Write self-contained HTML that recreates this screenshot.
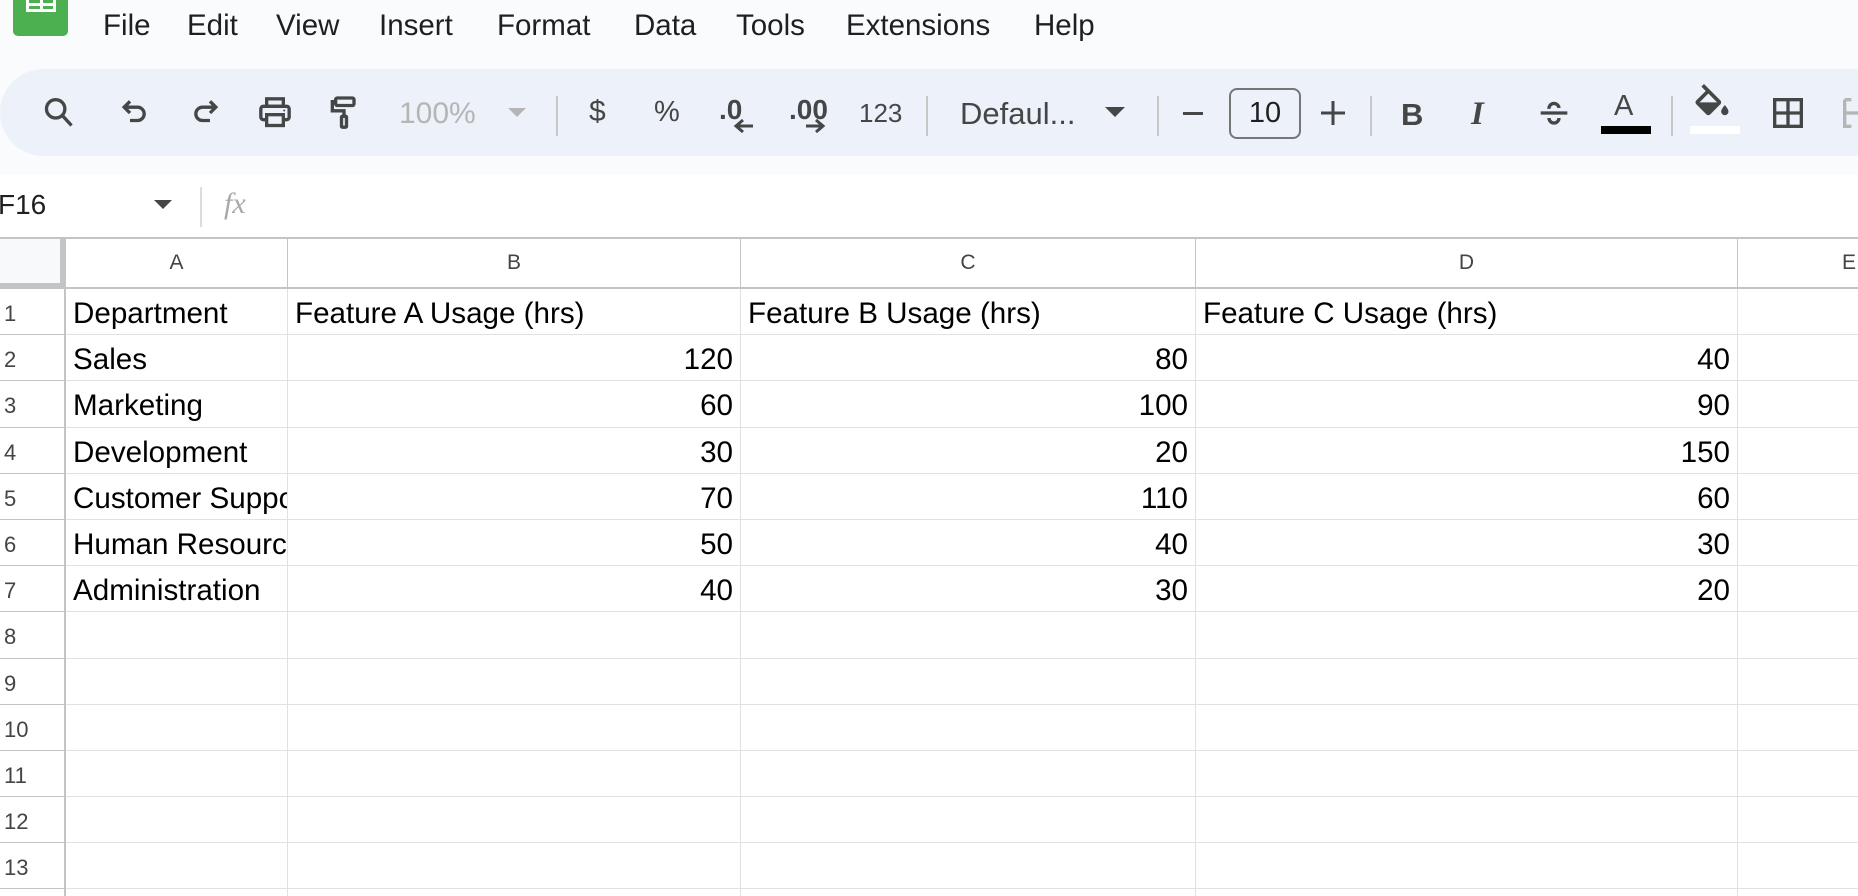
<!DOCTYPE html>
<html><head><meta charset="utf-8">
<style>
*{margin:0;padding:0;box-sizing:border-box}
html,body{width:1858px;height:896px;overflow:hidden}
body{background:#fff;font-family:"Liberation Sans",Arial,sans-serif;position:relative;color:#000}
.top{position:absolute;left:0;top:0;width:1858px;height:175px;background:#f9fbfd}
.menu{position:absolute;top:9px;font-size:29.5px;color:#1f1f1f}
.tb{position:absolute;left:0;top:69px;width:1900px;height:87px;background:#edf2fa;border-radius:44px}
.ic{position:absolute;top:93px;width:40px;height:40px}
.sep{position:absolute;top:96px;width:2px;height:40px;background:#c7c7c7}
.tt{position:absolute;font-size:28px;color:#444746}
.fx{position:absolute;left:0;top:175px;width:1858px;height:62px;background:#fff}
.grid{position:absolute;left:0;top:237px;display:grid;grid-template-columns:66px 222px 453px 455px 542px 200px;grid-template-rows:52px repeat(14,46.2px)}
.grid div{border-right:1px solid #e1e1e1;border-bottom:1px solid #e1e1e1;font-size:29.6px;line-height:45px;padding:2px 7px 0;white-space:nowrap;overflow:hidden}
.grid .h{border-bottom:2px solid #c4c4c4;border-right:1px solid #c4c4c4;font-size:21px;color:#444;text-align:center;line-height:48px;border-top:2px solid #c4c4c4;padding:0}
.grid .r{border-right:2px solid #c4c4c4;border-bottom:1px solid #c4c4c4;font-size:22px;color:#444;padding:3px 0 0 4px;line-height:44px}
.grid .n{text-align:right}
.grid .c{background:#f8f9fa;border-right:6px solid #c4c4c4;border-bottom:6px solid #c4c4c4;border-top:2px solid #c4c4c4}
</style></head><body>
<div class="top"></div>
<div style="position:absolute;left:13px;top:-8px;width:55px;height:44px;background:#4caf50;border-radius:5px"></div>
<div style="position:absolute;left:26px;top:-2px;width:30px;height:14px;border:3px solid #fff;border-top:none"></div>
<div style="position:absolute;left:40px;top:-2px;width:3px;height:14px;background:#fff"></div>
<div style="position:absolute;left:26px;top:3px;width:30px;height:3px;background:#fff"></div>
<span class="menu" style="left:103px">File</span>
<span class="menu" style="left:187px">Edit</span>
<span class="menu" style="left:276px">View</span>
<span class="menu" style="left:379px">Insert</span>
<span class="menu" style="left:497px">Format</span>
<span class="menu" style="left:634px">Data</span>
<span class="menu" style="left:736px">Tools</span>
<span class="menu" style="left:846px">Extensions</span>
<span class="menu" style="left:1034px">Help</span>
<div class="tb"></div>
<svg class="ic" style="left:39px" viewBox="0 0 24 24" fill="none" stroke="#444746" stroke-width="2"><circle cx="10" cy="9.5" r="5.5"/><path d="M14 13.5l5.5 6"/></svg>
<svg class="ic" style="left:115px" viewBox="0 0 24 24" fill="none" stroke="#444746" stroke-width="2"><path d="M9 5L5.5 8.5 9 12"/><path d="M5.5 8.5h8a4 4 0 0 1 0 8H9"/></svg>
<svg class="ic" style="left:185px" viewBox="0 0 24 24" fill="none" stroke="#444746" stroke-width="2"><path d="M15 5l3.5 3.5L15 12"/><path d="M18.5 8.5h-8a4 4 0 0 0 0 8H15"/></svg>
<svg class="ic" style="left:255px" viewBox="0 0 24 24" fill="none" stroke="#444746" stroke-width="2"><rect x="7" y="3.5" width="10" height="4.5"/><rect x="3.5" y="8" width="17" height="8" rx="1.5"/><rect x="7" y="13" width="10" height="6.5" fill="#edf2fa"/><circle cx="17.5" cy="10.5" r=".6" fill="#444746" stroke="none"/></svg>
<svg class="ic" style="left:324px" viewBox="0 0 24 24" fill="none" stroke="#444746" stroke-width="2"><rect x="7" y="3" width="11" height="4.5" rx="1"/><path d="M7 5.2H5v5.5h7v3"/><rect x="10.5" y="14" width="3" height="6.5" rx=".5"/></svg>
<span class="tt" style="left:399px;top:97px;color:#b5b5b5;font-size:30px">100%</span>
<svg style="position:absolute;left:508px;top:106px" width="18" height="12"><path d="M0 2h18L9 11z" fill="#b5b5b5"/></svg>
<div class="sep" style="left:556px"></div>
<span class="tt" style="left:589px;top:95px;font-size:30px">$</span>
<span class="tt" style="left:654px;top:96px;font-size:29px">%</span>
<span class="tt" style="left:719px;top:94px;font-size:28px;font-weight:bold">.0</span>
<svg style="position:absolute;left:733px;top:118px" width="22" height="16" fill="none" stroke="#444746" stroke-width="3"><path d="M20 8H4M10 2L3 8l7 6"/></svg>
<span class="tt" style="left:789px;top:94px;font-size:28px;font-weight:bold">.00</span>
<svg style="position:absolute;left:804px;top:118px" width="22" height="16" fill="none" stroke="#444746" stroke-width="3"><path d="M2 8h16M12 2l7 6-7 6"/></svg>
<span class="tt" style="left:859px;top:98px;font-size:26px">123</span>
<div class="sep" style="left:926px"></div>
<span class="tt" style="left:960px;top:96px;font-size:31px">Defaul...</span>
<svg style="position:absolute;left:1105px;top:106px" width="20" height="12"><path d="M0 1h20L10 11z" fill="#444746"/></svg>
<div class="sep" style="left:1157px"></div>
<div style="position:absolute;left:1183px;top:112px;width:20px;height:3px;background:#444746"></div>
<div style="position:absolute;left:1229px;top:88px;width:72px;height:51px;border:2px solid #747775;border-radius:8px;font-size:29px;color:#1f1f1f;text-align:center;line-height:47px">10</div>
<svg style="position:absolute;left:1321px;top:101px" width="24" height="24" stroke="#444746" stroke-width="3"><path d="M12 0v24M0 12h24"/></svg>
<div class="sep" style="left:1370px"></div>
<span class="tt" style="left:1401px;top:97px;font-weight:bold;font-size:31px">B</span>
<span class="tt" style="left:1471px;top:96px;font-weight:bold;font-style:italic;font-size:33px;font-family:'Liberation Serif',serif">I</span>
<svg class="ic" style="left:1534px" viewBox="0 0 24 24" fill="none" stroke="#444746" stroke-width="2"><path d="M4 12h16"/><path d="M9 9.5a3 3 0 0 1 6-.5M9 15a3 3 0 0 0 6 0"/></svg>
<span class="tt" style="left:1614px;top:90px;font-size:29px">A</span>
<div style="position:absolute;left:1601px;top:126px;width:50px;height:8px;background:#000"></div>
<div class="sep" style="left:1671px"></div>
<svg class="ic" style="left:1690px;top:84px;width:44px;height:44px" viewBox="0 0 24 24" fill="#444746"><path d="M16.56 8.94L7.62 0 6.21 1.41l2.38 2.38-5.15 5.15c-.59.59-.59 1.54 0 2.12l5.5 5.5c.29.29.68.44 1.06.44s.77-.15 1.06-.44l5.5-5.5c.59-.58.59-1.53 0-2.12zM5.21 10L10 5.21 14.79 10H5.21zM19 11.5s-2 2.17-2 3.5c0 1.1.9 2 2 2s2-.9 2-2c0-1.33-2-3.5-2-3.5z"/></svg>
<div style="position:absolute;left:1690px;top:126px;width:50px;height:8px;background:#fff"></div>
<svg class="ic" style="left:1768px" viewBox="0 0 24 24" fill="none" stroke="#444746" stroke-width="2"><rect x="4" y="4" width="16" height="16"/><path d="M12 4v16M4 12h16"/></svg>
<svg class="ic" style="left:1838px" viewBox="0 0 24 24" fill="none" stroke="#b5b5b5" stroke-width="2"><path d="M4 4h4M4 4v16h4"/><path d="M4 12h8"/></svg>
<div class="fx"></div>
<span style="position:absolute;left:-2px;top:189px;font-size:28px;color:#1f1f1f">F16</span>
<svg style="position:absolute;left:154px;top:199px" width="18" height="11"><path d="M0 1h18L9 10z" fill="#444746"/></svg>
<div style="position:absolute;left:200px;top:187px;width:2px;height:40px;background:#dadce0"></div>
<span style="position:absolute;left:224px;top:187px;font-size:30px;color:#a8a8a8;font-style:italic;font-family:'Liberation Serif',serif">fx</span>
<div class="grid">
<div class="h c"></div><div class="h">A</div><div class="h">B</div><div class="h">C</div><div class="h">D</div><div class="h" style="text-align:left;padding-left:104px">E</div>
<div class="r">1</div><div>Department</div><div>Feature A Usage (hrs)</div><div>Feature B Usage (hrs)</div><div>Feature C Usage (hrs)</div><div></div>
<div class="r">2</div><div>Sales</div><div class="n">120</div><div class="n">80</div><div class="n">40</div><div></div>
<div class="r">3</div><div>Marketing</div><div class="n">60</div><div class="n">100</div><div class="n">90</div><div></div>
<div class="r">4</div><div>Development</div><div class="n">30</div><div class="n">20</div><div class="n">150</div><div></div>
<div class="r">5</div><div>Customer Support</div><div class="n">70</div><div class="n">110</div><div class="n">60</div><div></div>
<div class="r">6</div><div>Human Resources</div><div class="n">50</div><div class="n">40</div><div class="n">30</div><div></div>
<div class="r">7</div><div>Administration</div><div class="n">40</div><div class="n">30</div><div class="n">20</div><div></div>
<div class="r">8</div><div></div><div></div><div></div><div></div><div></div>
<div class="r">9</div><div></div><div></div><div></div><div></div><div></div>
<div class="r">10</div><div></div><div></div><div></div><div></div><div></div>
<div class="r">11</div><div></div><div></div><div></div><div></div><div></div>
<div class="r">12</div><div></div><div></div><div></div><div></div><div></div>
<div class="r">13</div><div></div><div></div><div></div><div></div><div></div>
<div class="r">14</div><div></div><div></div><div></div><div></div><div></div>
</div>
</body></html>
